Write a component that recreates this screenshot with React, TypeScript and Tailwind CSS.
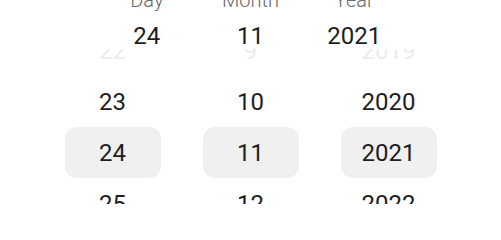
const columns = [
  { label: "Day", items: ["22", "23", "24", "25"] },
  { label: "Month", items: ["9", "10", "11", "12"] },
  { label: "Year", items: ["2019", "2020", "2021", "2022"] },
];

const selectedIndex = 2;

export default function App() {
  return (
    <div
      className="h-[204px] w-[501px] overflow-hidden bg-white text-[#1e1e1e]"
      style={{ fontFamily: "Roboto, 'Noto Sans', sans-serif" }}
    >
      {/* header: labels + current value */}
      <div className="mx-auto grid h-[49px] w-[311px] grid-cols-3">
        {columns.map((col) => (
          <div key={col.label} className="flex flex-col items-center">
            <div className="-mt-[10px] text-[20px] leading-[20px] font-light text-[#6a6a6a]">
              {col.label}
            </div>
            <div className="mt-[12px] text-[24px] leading-[28px]">
              {col.items[selectedIndex]}
            </div>
          </div>
        ))}
      </div>

      {/* wheel */}
      <div className="h-[155px] overflow-hidden">
        <div className="mx-auto -mt-[24px] grid w-[414px] grid-cols-3">
          {columns.map((col) => (
            <div key={col.label} className="flex flex-col items-center">
              {col.items.map((v, i) => (
                <div
                  key={v}
                  className={
                    i === selectedIndex
                      ? "flex h-[51px] w-[96px] items-center justify-center rounded-xl bg-[#f0f0f0] text-[24px]"
                      : i === 0
                        ? "flex h-[51px] w-[96px] items-center justify-center text-[24px] text-[#ececec]"
                        : "flex h-[51px] w-[96px] items-center justify-center text-[24px]"
                  }
                >
                  {v}
                </div>
              ))}
            </div>
          ))}
        </div>
      </div>
    </div>
  );
}
